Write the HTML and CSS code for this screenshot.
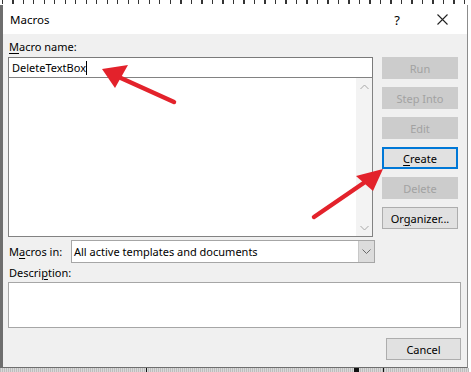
FILE: index.html
```html
<!DOCTYPE html>
<html lang="en">
<head>
    <meta charset="UTF-8">
    <title>Macros</title>
    <link rel="stylesheet" href="styles.css">
</head>
<body>

    <div class="ruler"></div>

    <div class="dialog">
        <div class="titlebar">
            <span class="title">Macros</span>
            <span class="help">?</span>
            <svg class="close" width="11" height="11" viewBox="0 0 11 11">
                <path d="M0.5 0.5 L10.5 10.5 M10.5 0.5 L0.5 10.5" stroke="#222" stroke-width="1.1" fill="none"/>
            </svg>
        </div>

        <div class="content">
            <div class="top">
                <div class="left">
                    <div class="label"><u>M</u>acro name:</div>
                    <div class="name-input">DeleteTextBox<span class="caret"></span></div>
                    <div class="macro-list">
                        <div class="scrollbar">
                            <svg width="9" height="6" viewBox="0 0 9 6"><path d="M0.5 5 L4.5 1 L8.5 5" stroke="#a8a8a8" fill="none"/></svg>
                            <svg width="9" height="6" viewBox="0 0 9 6"><path d="M0.5 1 L4.5 5 L8.5 1" stroke="#a8a8a8" fill="none"/></svg>
                        </div>
                    </div>
                </div>
                <div class="buttons">
                    <button class="btn disabled">Run</button>
                    <button class="btn disabled">Step Into</button>
                    <button class="btn disabled">Edit</button>
                    <button class="btn focused"><u>C</u>reate</button>
                    <button class="btn disabled">Delete</button>
                    <button class="btn">Or<u>g</u>anizer...</button>
                </div>
            </div>

            <div class="macros-in">
                <span class="label">M<u>a</u>cros in:</span>
                <div class="select">
                    <span class="select-text">All active templates and documents</span>
                    <span class="select-btn">
                        <svg width="9" height="5" viewBox="0 0 9 5"><path d="M0.5 0.5 L4.5 4.5 L8.5 0.5" stroke="#6a6a6a" fill="none"/></svg>
                    </span>
                </div>
            </div>

            <div class="label desc-label">Descri<u>p</u>tion:</div>
            <div class="desc-box"></div>

            <div class="footer">
                <button class="btn cancel">Cancel</button>
            </div>
        </div>
    </div>

    <div class="bottom-strip">
        <span class="mark tick1"></span>
        <span class="mark ymark"></span>
        <span class="mark tick2"></span>
    </div>

    <!-- red annotation arrows drawn over the dialog -->
    <svg class="arrows" width="471" height="372" viewBox="0 0 471 372">
        <path d="M174 102 L112 74" stroke="#e3222b" stroke-width="4.5" stroke-linecap="round"/>
        <path d="M102 69 L128 65 L115 88 Z" fill="#e3222b"/>
        <path d="M314 217 L368 180" stroke="#e3222b" stroke-width="4.5" stroke-linecap="round"/>
        <path d="M383 169 L356 176 L373 191 Z" fill="#e3222b"/>
    </svg>

</body>
</html>
```

FILE: styles.css
```css
body {
    margin: 0;
    width: 471px;
    height: 372px;
    overflow: hidden;
    background: #ffffff;
    font-family: "Noto Sans", "Open Sans", sans-serif;
    font-size: 11px;
    color: #000;
    position: relative;
}

u {
    text-decoration-thickness: 1px;
    text-underline-offset: 2px;
}

.ruler {
    height: 5px;
    width: 468px;
    background: repeating-linear-gradient(90deg, #333 0, #333 1px, transparent 1px, transparent 10.5px) 2px 0 / 100% 4px no-repeat, #fff;
}

.dialog {
    width: 464px;
    height: 362px;
    border-left: 3px solid #6e6e6e;
    border-right: 1px solid #8c8c8c;
    border-bottom: 1px solid #6e6e6e;
    background: #f0f0f0;
    display: flex;
    flex-direction: column;
}

.titlebar {
    height: 29px;
    background: #fff;
    display: flex;
    align-items: center;
    padding-left: 7px;
}

.title {
    flex: 1;
    font-size: 11.5px;
}

.help {
    font-size: 13px;
    margin-right: 37px;
}

.close {
    margin-right: 19px;
}

.content {
    padding: 5px 6px 0 5px;
}

.top {
    display: flex;
    gap: 9px;
}

.left {
    width: 365px;
}

.label {
    height: 16px;
    line-height: 16px;
    padding-left: 1px;
    margin-bottom: 2px;
}

.name-input {
    height: 19px;
    line-height: 19px;
    border: 1px solid #7a7a7a;
    border-bottom: none;
    background: #fff;
    padding-left: 3px;
}

.caret {
    display: inline-block;
    width: 1px;
    height: 14px;
    background: #000;
    vertical-align: -3px;
}

.macro-list {
    height: 158px;
    border: 1px solid #828282;
    background: #fff;
    display: flex;
    justify-content: flex-end;
}

.scrollbar {
    width: 16px;
    background: #f3f3f3;
    display: flex;
    flex-direction: column;
    justify-content: space-between;
    align-items: center;
    padding: 6px 0 5px;
}

.buttons {
    margin-top: 18px;
    width: 76px;
    display: flex;
    flex-direction: column;
    gap: 8px;
}

.btn {
    height: 22px;
    font-family: inherit;
    font-size: 11px;
    background: #e1e1e1;
    border: 1px solid #adadad;
    color: #000;
    padding: 0;
}

.btn.disabled {
    background: #cccccc;
    border-color: #cccccc;
    color: #a2a2a2;
}

.btn.focused {
    border: 2px solid #0078d7;
}

.macros-in {
    display: flex;
    align-items: center;
    margin-top: 3px;
}

.macros-in .label {
    width: 62px;
    margin: 0;
}

.select {
    width: 302px;
    height: 21px;
    border: 1px solid #a6a6a6;
    background: #fff;
    display: flex;
}

.select-text {
    flex: 1;
    line-height: 21px;
    padding-left: 2px;
}

.select-btn {
    width: 15px;
    background: #dcdcdc;
    border-left: 1px solid #c8c8c8;
    display: flex;
    align-items: center;
    justify-content: center;
}

.desc-label {
    margin-top: 2px;
    margin-bottom: 1px;
}

.desc-box {
    height: 44px;
    border: 1px solid #a6a6a6;
    background: #fff;
}

.footer {
    display: flex;
    justify-content: flex-end;
    margin-top: 10px;
}

.cancel {
    width: 75px;
}

.bottom-strip {
    height: 4px;
    width: 469px;
    background: repeating-linear-gradient(90deg, #bdbdbd 0, #bdbdbd 1px, #d9d9d9 1px, #d9d9d9 2px);
    display: flex;
}

.mark {
    display: block;
    height: 4px;
    background: #111;
}

.tick1 {
    width: 1px;
    margin-left: 146px;
}

.ymark {
    width: 5px;
    margin-left: 207px;
}

.tick2 {
    width: 1px;
    margin-left: 24px;
}

.arrows {
    position: absolute;
    left: 0;
    top: 0;
    pointer-events: none;
}
```
